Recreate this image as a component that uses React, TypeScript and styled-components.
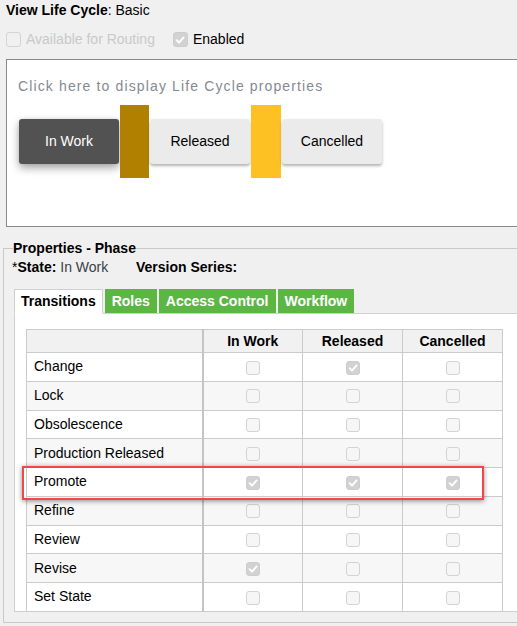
import React from "react";
import styled, { createGlobalStyle, css } from "styled-components";

const GlobalStyle = createGlobalStyle`
  html, body {
    margin: 0;
    padding: 0;
    background: #f0f0f0;
    overflow: hidden;
  }
  body {
    font-family: "Liberation Sans", Arial, sans-serif;
    font-size: 14px;
    line-height: 17px;
    color: #000;
  }
`;

const Page = styled.div`
  width: 560px;
  padding-top: 2px;
`;

const TitleLine = styled.div`
  padding-left: 6px;
  b { font-weight: bold; }
`;

const OptionsRow = styled.div`
  display: flex;
  align-items: center;
  margin-top: 12px;
  padding-left: 6px;
  gap: 18px;
`;

const Option = styled.label<{ $disabled?: boolean }>`
  display: flex;
  align-items: center;
  gap: 5px;
  color: ${(p) => (p.$disabled ? "#c9c9c9" : "#000")};
`;

const Box = styled.span<{ $checked?: boolean; $size?: number; $tone?: "top" | "cell" }>`
  display: inline-flex;
  align-items: center;
  justify-content: center;
  box-sizing: border-box;
  width: ${(p) => p.$size ?? 14}px;
  height: ${(p) => p.$size ?? 14}px;
  border-radius: 3px;
  ${(p) =>
    p.$checked
      ? css`
          background: #d2d2d2;
          border: 1px solid #cdcdcd;
        `
      : css`
          background: ${p.$tone === "top" ? "#f0f0f0" : "#f6f6f6"};
          border: 1px solid ${p.$tone === "top" ? "#d4d4d4" : "#d3d3d3"};
        `}
  svg { display: block; }
`;

const Check = ({ checked, size, tone }: { checked?: boolean; size?: number; tone?: "top" | "cell" }) => (
  <Box $checked={checked} $size={size} $tone={tone}>
    {checked && (
      <svg width="10" height="10" viewBox="0 0 10 10">
        <path d="M1.6 5.2 L4 7.6 L8.6 2.4" fill="none" stroke="#fff" strokeWidth="1.9" strokeLinecap="round" strokeLinejoin="round" />
      </svg>
    )}
  </Box>
);

const LifeCycleBox = styled.div`
  margin: 11px 0 0 6px;
  box-sizing: border-box;
  width: 560px;
  height: 168px;
  background: #fff;
  border: 1px solid #8a8a8a;
  padding: 18px 0 0 11px;
`;

const Hint = styled.div`
  color: #848a93;
  letter-spacing: 1.13px;
`;

const Steps = styled.div`
  display: flex;
  align-items: center;
  gap: 1px;
  margin-top: 10px;
  margin-left: 1px;
`;

const StateButton = styled.div<{ $active?: boolean }>`
  width: 100px;
  height: 45px;
  display: flex;
  align-items: center;
  justify-content: center;
  border-radius: 3px;
  background: ${(p) => (p.$active ? "#525252" : "#ebebeb")};
  color: ${(p) => (p.$active ? "#fff" : "#000")};
  box-shadow: ${(p) =>
    p.$active ? "0 4px 9px rgba(0,0,0,0.35), 0 0 4px rgba(0,0,0,0.08)" : "0 2px 3px rgba(0,0,0,0.3)"};
`;

const Connector = styled.div<{ $color: string; $w: number }>`
  width: ${(p) => p.$w}px;
  height: 73px;
  background: ${(p) => p.$color};
`;

const Fieldset = styled.fieldset`
  margin: 13px 0 0 3px;
  width: 560px;
  box-sizing: border-box;
  border: 1px solid #c9c9c9;
  padding: 0 0 10px 9px;
`;

const Legend = styled.legend`
  padding: 0;
  font-weight: bold;
`;

const StateLine = styled.div`
  display: flex;
  margin-top: 2px;
  margin-left: -1px;
  b { font-weight: bold; }
`;

const StateField = styled.span`
  width: 124px;
  white-space: nowrap;
`;

const Muted = styled.span`
  color: #3a4048;
`;

const Tabs = styled.div`
  display: flex;
  gap: 2px;
  margin: 13px 0 0 1px;
  position: relative;
  z-index: 1;
`;

const Tab = styled.div<{ $active?: boolean }>`
  height: 24px;
  box-sizing: border-box;
  display: flex;
  align-items: center;
  font-weight: bold;
  ${(p) =>
    p.$active
      ? css`
          padding: 0 6px;
          background: #fff;
          border: 1px solid #cfcfcf;
          border-bottom: 1px solid #fff;
          height: 25px;
          margin-bottom: -1px;
          color: #000;
        `
      : css`
          padding: 0 7px;
          background: #5cb644;
          color: #fff;
        `}
`;

const Panel = styled.div`
  margin-left: 1px;
  background: #fff;
  border: 1px solid #cfcfcf;
  border-right: none;
  padding: 15px 0 0 11px;
  height: 299px;
  box-sizing: border-box;
`;

const TableWrap = styled.div`
  position: relative;
  width: 476px;
`;

const Grid = styled.table`
  width: 476px;
  border-collapse: collapse;
  table-layout: fixed;
  td, th {
    border: 1px solid #cbcbcb;
    padding: 0;
  }
`;

const HeadCell = styled.th<{ $first?: boolean }>`
  background: #f1f1f1;
  height: 22px;
  font-weight: bold;
  text-align: center;
  ${(p) => p.$first && css`border-right: 2px solid #c4c4c4 !important;`}
`;

const Row = styled.tr<{ $striped?: boolean }>`
  height: 28.75px;
  background: ${(p) => (p.$striped ? "#f7f7f7" : "#fff")};
`;

const LabelCell = styled.td`
  padding-left: 7px !important;
  border-right: 2px solid #c4c4c4 !important;
`;

const BoxCell = styled.td`
  text-align: center;
  vertical-align: middle;
  & > span { vertical-align: middle; }
`;

const Highlight = styled.div`
  position: absolute;
  left: -4px;
  top: 137px;
  width: 462px;
  height: 34px;
  box-sizing: border-box;
  border: 2px solid #f2474a;
  box-shadow: 0 1px 5px rgba(0, 0, 0, 0.45);
  pointer-events: none;
`;

const rows: { name: string; v: [boolean, boolean, boolean] }[] = [
  { name: "Change", v: [false, true, false] },
  { name: "Lock", v: [false, false, false] },
  { name: "Obsolescence", v: [false, false, false] },
  { name: "Production Released", v: [false, false, false] },
  { name: "Promote", v: [true, true, true] },
  { name: "Refine", v: [false, false, false] },
  { name: "Review", v: [false, false, false] },
  { name: "Revise", v: [true, false, false] },
  { name: "Set State", v: [false, false, false] },
];

export default function App() {
  return (
    <Page>
      <GlobalStyle />
      <TitleLine>
        <b>View Life Cycle</b>: Basic
      </TitleLine>
      <OptionsRow>
        <Option $disabled>
          <Check size={15} tone="top" />
          Available for Routing
        </Option>
        <Option>
          <Check size={15} checked tone="top" />
          Enabled
        </Option>
      </OptionsRow>
      <LifeCycleBox>
        <Hint>Click here to display Life Cycle properties</Hint>
        <Steps>
          <StateButton $active>In Work</StateButton>
          <Connector $color="#b08000" $w={29} />
          <StateButton>Released</StateButton>
          <Connector $color="#fdc124" $w={30} />
          <StateButton>Cancelled</StateButton>
        </Steps>
      </LifeCycleBox>
      <Fieldset>
        <Legend>Properties - Phase</Legend>
        <StateLine>
          <StateField>
            *<b>State:</b> <Muted>In Work</Muted>
          </StateField>
          <b>Version Series:</b>
        </StateLine>
        <Tabs>
          <Tab $active>Transitions</Tab>
          <Tab>Roles</Tab>
          <Tab>Access Control</Tab>
          <Tab>Workflow</Tab>
        </Tabs>
        <Panel>
          <TableWrap>
            <Grid>
              <colgroup>
                <col style={{ width: 176 }} />
                <col style={{ width: 100 }} />
                <col style={{ width: 100 }} />
                <col style={{ width: 100 }} />
              </colgroup>
              <thead>
                <tr>
                  <HeadCell $first />
                  <HeadCell>In Work</HeadCell>
                  <HeadCell>Released</HeadCell>
                  <HeadCell>Cancelled</HeadCell>
                </tr>
              </thead>
              <tbody>
                {rows.map((r, i) => (
                  <Row key={r.name} $striped={i % 2 === 1}>
                    <LabelCell>{r.name}</LabelCell>
                    {r.v.map((c, j) => (
                      <BoxCell key={j}>
                        <Check checked={c} />
                      </BoxCell>
                    ))}
                  </Row>
                ))}
              </tbody>
            </Grid>
            <Highlight />
          </TableWrap>
        </Panel>
      </Fieldset>
    </Page>
  );
}
